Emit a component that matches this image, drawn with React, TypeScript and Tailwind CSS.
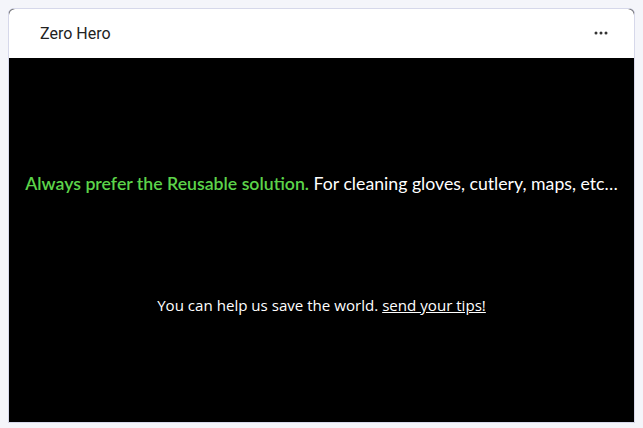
export default function App() {
  return (
    <div className="min-h-screen bg-[#f4f5fa] p-2">
      <div className="rounded-t-md border border-[#d6d8ea] bg-black">
        <div className="flex h-[49px] items-center justify-between rounded-t-md bg-white pl-[31px] pr-[26px]">
          <span className="text-[16px] text-[#222] font-['Roboto',sans-serif]">Zero Hero</span>
          <svg width="14" height="4" viewBox="0 0 14 4" className="-mt-px text-[#333]">
            <circle cx="2" cy="2" r="1.5" fill="currentColor" />
            <circle cx="7" cy="2" r="1.5" fill="currentColor" />
            <circle cx="12" cy="2" r="1.5" fill="currentColor" />
          </svg>
        </div>
        <div className="flex h-[364px] flex-col items-center">
          <p className="mt-[113px] whitespace-nowrap text-[17.7px] font-['Lato',sans-serif] text-white">
            <span className="font-semibold text-[#5cd44a]">Always prefer the Reusable solution.</span>{' '}
            For cleaning gloves, cutlery, maps, etc…
          </p>
          <p className="mt-[96px] whitespace-nowrap text-[15.1px] font-['Open_Sans',sans-serif] text-white">
            You can help us save the world.{' '}
            <a href="#" className="underline">send your tips!</a>
          </p>
        </div>
      </div>
    </div>
  );
}
